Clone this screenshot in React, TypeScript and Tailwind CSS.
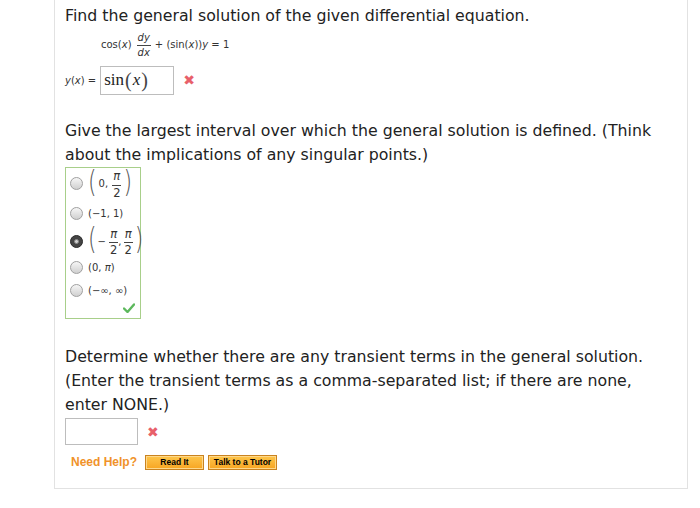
import React from 'react'

const sans = { fontFamily: '"DejaVu Sans", Verdana, sans-serif' }
const serif = { fontFamily: '"Liberation Serif", "Times New Roman", serif' }
const arial = { fontFamily: '"Liberation Sans", Arial, sans-serif' }

function Radio({ on }: { on?: boolean }) {
  if (on) {
    return (
      <span className="inline-flex w-[13px] h-[13px] rounded-full items-center justify-center bg-[#444] border border-[#2a2a2a] shrink-0">
        <span className="w-[5px] h-[5px] rounded-full bg-[#cfcfcf] border border-[#888]" />
      </span>
    )
  }
  return (
    <span className="inline-block w-[13px] h-[13px] rounded-full border border-[#a0a0a0] bg-gradient-to-b from-[#f6f6f6] to-[#d0d0d0] shrink-0" />
  )
}

function Frac({ top, bottom, italic, italicBottom }: { top: string; bottom: string; italic?: boolean; italicBottom?: boolean }) {
  return (
    <span className="inline-flex flex-col items-center leading-none mx-[2px]">
      <span className={`px-[1px] pb-[2px] ${italic ? 'italic' : ''}`}>{top}</span>
      <span className="block h-px w-full bg-[#444]" />
      <span className={`px-[1px] pt-[2px] ${italicBottom ? 'italic' : ''}`}>{bottom}</span>
    </span>
  )
}

function Paren({ children }: { children: React.ReactNode }) {
  return (
    <span className="inline-flex items-center">
      <span className="text-[22px] leading-none font-extralight text-[#555] scale-y-[1.35] -mt-[2px]">(</span>
      {children}
      <span className="text-[22px] leading-none font-extralight text-[#555] scale-y-[1.35] -mt-[2px]">)</span>
    </span>
  )
}

function Cross() {
  return <span className="text-[#e8606a] text-[14px] font-bold leading-none">✖</span>
}

export default function App() {
  return (
    <div className="w-[700px] h-[508px] bg-white overflow-hidden text-[#222]" style={sans}>
      <div className="ml-[54px] w-[634px] h-[489px] border-l border-r border-b border-[#e2e2e2] pl-[10px] pr-[10px]">
        <p className="text-[15.75px] leading-[24px] pt-[4px]">Find the general solution of the given differential equation.</p>

        <div className="flex items-center text-[10px] text-[#333] ml-[36px] mt-[1px] h-[30px]">
          <span>cos(<i>x</i>)</span>
          <span className="ml-[3px]"><Frac top="dy" bottom="dx" italic italicBottom /></span>
          <span className="ml-[2px]">+ (sin(<i>x</i>))<i>y</i> = 1</span>
        </div>

        <div className="flex items-center mt-[6px] h-[30px]">
          <span className="text-[10px] text-[#333]"><i>y</i>(<i>x</i>) =</span>
          <div className="ml-[4px] w-[74px] h-[29px] border border-[#bdbdbd] flex items-center pl-[3px] text-[17px]" style={serif}>
            <span>sin</span><span className="text-[#444] text-[20px] leading-none ml-[1px]">(</span><i className="mx-[1px]">x</i><span className="text-[#444] text-[20px] leading-none">)</span>
          </div>
          <span className="ml-[9px]"><Cross /></span>
        </div>

        <p className="text-[15.75px] leading-[24px] mt-[24px]">Give the largest interval over which the general solution is defined. (Think about the implications of any singular points.)</p>

        <div className="w-[76px] h-[152px] border border-[#a8cf8a] relative pl-[4px] text-[10px] text-[#333]">
          <div className="flex items-center gap-[5px] h-[31px]">
            <Radio />
            <Paren>
              <span className="ml-[2px]">0,</span>
              <span className="ml-[2px] text-[11.5px]"><Frac top="π" bottom="2" italic /></span>
            </Paren>
          </div>
          <div className="flex items-center gap-[5px] h-[27px] mt-[1px]">
            <Radio />
            <span>(−1, 1)</span>
          </div>
          <div className="flex items-center gap-[5px] h-[28px]">
            <Radio on />
            <Paren>
              <span className="ml-[1px]">−</span>
              <span className="ml-[1px] text-[11.5px]"><Frac top="π" bottom="2" italic /></span>
              <span className="-ml-[2px]">,</span>
              <span className="text-[11.5px]"><Frac top="π" bottom="2" italic /></span>
            </Paren>
          </div>
          <div className="flex items-center gap-[5px] h-[25px]">
            <Radio />
            <span>(0, <i>π</i>)</span>
          </div>
          <div className="flex items-center gap-[5px] h-[20px]">
            <Radio />
            <span>(−∞, ∞)</span>
          </div>
          <svg className="absolute right-[5px] bottom-[5px]" width="12" height="10" viewBox="0 0 12 10">
            <path d="M1 5.5 L4.5 9 L11 1.5" fill="none" stroke="#5cb85c" strokeWidth="2.4" strokeLinecap="round" strokeLinejoin="round" />
          </svg>
        </div>

        <p className="text-[15.75px] leading-[24px] mt-[26px]">Determine whether there are any transient terms in the general solution. (Enter the transient terms as a comma-separated list; if there are none, enter NONE.)</p>

        <div className="flex items-center mt-[1px]">
          <div className="w-[73px] h-[27px] border border-[#bdbdbd]" />
          <span className="ml-[9px]"><Cross /></span>
        </div>

        <div className="flex items-center mt-[8px] ml-[6px]">
          <span className="text-[#f0922a] text-[12px] font-bold" style={arial}>Need Help?</span>
          <button className="ml-[8px] w-[59px] h-[15px] bg-gradient-to-b from-[#fdc64a] to-[#f7a520] border border-[#c98320] text-[8.5px] font-bold text-black leading-none shadow-[inset_0_0_0_1px_#ffd88a]" style={arial}>Read It</button>
          <button className="ml-[4px] w-[69px] h-[15px] bg-gradient-to-b from-[#fdc64a] to-[#f7a520] border border-[#c98320] text-[8.5px] font-bold text-black leading-none shadow-[inset_0_0_0_1px_#ffd88a]" style={arial}>Talk to a Tutor</button>
        </div>
      </div>
    </div>
  )
}
